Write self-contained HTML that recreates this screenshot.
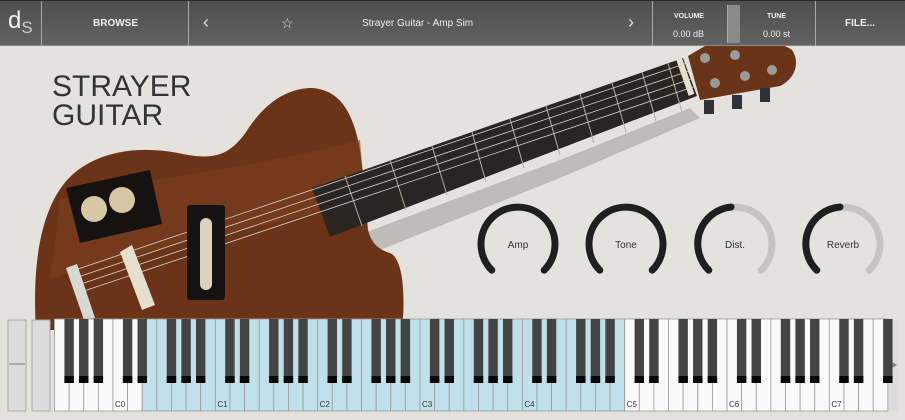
<!DOCTYPE html>
<html><head><meta charset="utf-8"><style>
*{margin:0;padding:0;box-sizing:border-box}
body{width:905px;height:420px;overflow:hidden;background:#e3e1dc;font-family:"Liberation Sans",sans-serif;position:relative}
#bg{position:absolute;left:0;top:0}
.hdr{position:absolute;left:0;top:0;width:905px;height:46px;background:linear-gradient(#4e4e4e,#626262);border-top:1px solid #2a2a2a;border-bottom:1px solid #8a8a8a;color:#eee}
.div{position:absolute;top:0;width:1px;height:45px;background:#a8a8a8}
.t{position:absolute;font-size:10px;white-space:nowrap}
.b{font-weight:bold}
.title{position:absolute;left:52px;top:72px;font-size:30px;line-height:29px;color:#333;font-weight:300}
</style></head><body>
<svg id="bg" width="905" height="420">
<rect width="905" height="420" fill="#e4e2dd"/>
<polygon points="345,240 560,160 690,108 700,118 560,178 360,258" fill="#8f8e8c" opacity="0.45"/>
<path d="M36,330 C32,265 40,205 72,175 C100,150 140,146 178,153 C210,160 228,158 246,132 C265,102 288,88 312,88 C340,90 356,112 362,165 L368,230 C372,245 380,250 390,253 C402,258 406,290 402,330 Z" fill="#6b3418"/>
<path d="M60,200 C120,180 250,170 360,140 L365,200 C260,230 130,250 50,280 Z" fill="#7c3e1e" opacity="0.6"/>
<polygon points="312,188 683,58 697,96 330,237" fill="#2b2522"/>
<g stroke="#b8ab95" stroke-width="1">
<line x1="345" y1="176" x2="362" y2="226"/><line x1="390" y1="160" x2="406" y2="210"/><line x1="432" y1="146" x2="447" y2="195"/><line x1="472" y1="132" x2="486" y2="182"/><line x1="510" y1="119" x2="524" y2="168"/><line x1="546" y1="106" x2="560" y2="155"/><line x1="580" y1="94" x2="594" y2="143"/><line x1="612" y1="83" x2="626" y2="132"/><line x1="642" y1="72" x2="656" y2="121"/><line x1="668" y1="63" x2="682" y2="112"/>
</g>
<rect x="682" y="56" width="6" height="40" fill="#e8e0cc" transform="rotate(-19 685 76)"/>
<path d="M688,56 L705,46 C740,40 775,38 792,50 C800,62 796,78 780,86 L700,100 Z" fill="#6a3418"/>
<g fill="#9a9a9a"><circle cx="705" cy="58" r="5"/><circle cx="735" cy="55" r="5"/><circle cx="715" cy="83" r="5"/><circle cx="745" cy="76" r="5"/><circle cx="772" cy="70" r="5"/></g>
<g fill="#2f3236"><rect x="704" y="100" width="10" height="14"/><rect x="732" y="95" width="10" height="14"/><rect x="760" y="88" width="10" height="14"/></g>
<g stroke="#d6d3cc" stroke-width="0.8"><line x1="75" y1="270" x2="690" y2="62"/><line x1="78" y1="277" x2="692" y2="70"/><line x1="81" y1="284" x2="694" y2="78"/><line x1="84" y1="291" x2="696" y2="86"/></g>
<polygon points="66,188 150,170 162,224 80,243" fill="#151212"/>
<circle cx="94" cy="209" r="13" fill="#d8c7a4"/><circle cx="122" cy="200" r="13" fill="#d8c7a4"/>
<rect x="187" y="205" width="38" height="95" rx="3" fill="#141212"/>
<rect x="200" y="218" width="12" height="72" rx="6" fill="#ddd3bd"/>
<polygon points="120,252 132,245 155,305 142,310" fill="#e5dfd0"/>
<polygon points="66,268 77,264 95,318 84,320" fill="#d8d8d4"/>
<g fill="none" stroke-width="7" stroke-linecap="round">
<path d="M491.8,270.2 A37,37 0 1 1 544.2,270.2" stroke="#1f1f1f"/>
<path d="M599.8,270.2 A37,37 0 1 1 652.2,270.2" stroke="#1f1f1f"/>
<path d="M708.8,270.2 A37,37 0 1 1 761.2,270.2" stroke="#c4c3c0"/>
<path d="M708.8,270.2 A37,37 0 0 1 731,207" stroke="#1f1f1f"/>
<path d="M816.8,270.2 A37,37 0 1 1 869.2,270.2" stroke="#c4c3c0"/>
<path d="M816.8,270.2 A37,37 0 0 1 840,207" stroke="#1f1f1f"/>
</g>
<g font-family="Liberation Sans" font-size="10" fill="#333" text-anchor="middle">
<text x="518" y="248">Amp</text><text x="626" y="248">Tone</text><text x="735" y="248">Dist.</text><text x="843" y="248">Reverb</text>
</g>
<rect x="8" y="320" width="18" height="91" fill="#dcdcdc" stroke="#aaa"/>
<line x1="9" y1="364" x2="25" y2="364" stroke="#777"/>
<rect x="32" y="320" width="18" height="91" fill="#dcdcdc" stroke="#aaa"/>
<rect x="54" y="320" width="12" height="91" fill="#dcdcdc"/>
<polygon points="55,365 63,360 63,370" fill="#888"/>
<rect x="887" y="320" width="11" height="91" fill="#dcdcdc"/>
<polygon points="897,365 889,360 889,370" fill="#888"/>
<g id="kb"></g>
</svg>
<div class="title">STRAYER<br>GUITAR</div>
<div class="hdr">
<div class="t" style="left:8px;top:6px;font-size:24px;color:#f0f0f0;font-weight:300">d<span style="font-size:17px;vertical-align:-5px;color:#ccc">S</span></div>
<div class="div" style="left:41px"></div>
<div class="t b" style="left:93px;top:17px">BROWSE</div>
<div class="div" style="left:188px"></div>
<div class="t" style="left:203px;top:11px;font-size:18px;color:#ddd">&#8249;</div>
<div class="t" style="left:281px;top:14px;font-size:14px;color:#ddd">&#9734;</div>
<div class="t" style="left:362px;top:17px">Strayer Guitar - Amp Sim</div>
<div class="t" style="left:628px;top:11px;font-size:18px;color:#ddd">&#8250;</div>
<div class="div" style="left:652px"></div>
<div class="t b" style="left:674px;top:12px;font-size:7px">VOLUME</div>
<div class="t" style="left:673px;top:28px;font-size:9px">0.00 dB</div>
<div style="position:absolute;left:727px;top:4px;width:13px;height:38px;background:#8a8a8a;border-left:1px solid #aaa"></div>
<div class="t b" style="left:767px;top:12px;font-size:7px">TUNE</div>
<div class="t" style="left:763px;top:28px;font-size:9px">0.00 st</div>
<div class="div" style="left:815px"></div>
<div class="t b" style="left:845px;top:17px">FILE...</div>
</div>
<script>
var g=document.getElementById('kb'),s='';
var x0=54.5,w=14.62,names=['F','G','A','B','C','D','E'];
for(var i=0;i<57;i++){var x=x0+i*w;var blue=i>=6&&i<=38;
s+='<rect x="'+x+'" y="319" width="'+w+'" height="92" fill="'+(blue?'#c0e0ea':'#fafafa')+'" stroke="#9a9a9a" stroke-width="0.8"/>';
if(names[i%7]=='C'){s+='<text x="'+(x+2)+'" y="407" font-size="8" font-family="Liberation Sans" fill="#333">C'+((i-4)/7)+'</text>';}}
for(var i=0;i<57;i++){var n=names[i%7];if(n=='B'||n=='E')continue;var x=x0+(i+1)*w;
s+='<rect x="'+(x-4.7)+'" y="319" width="9.4" height="64" fill="#444"/><rect x="'+(x-4.7)+'" y="376" width="9.4" height="7" fill="#050505"/>';}
g.innerHTML=s;
</script>
</body></html>
